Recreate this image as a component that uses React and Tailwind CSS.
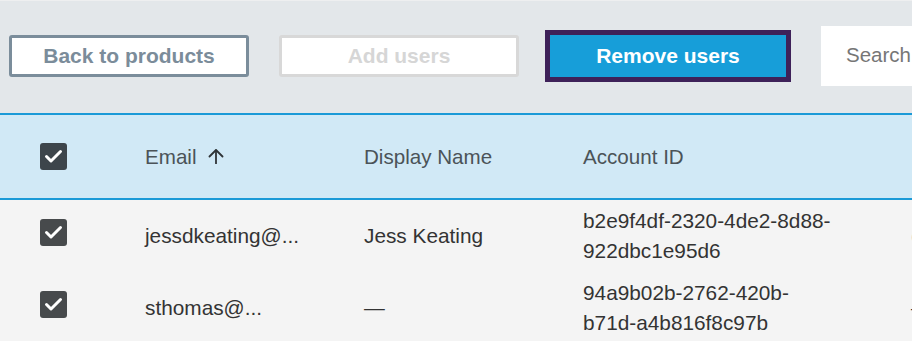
import React from 'react';

const users = [
  {
    email: 'jessdkeating@...',
    name: 'Jess Keating',
    id: ['b2e9f4df-2320-4de2-8d88-', '922dbc1e95d6'],
    extra: 'o',
    extraClass: 'text-[#b5b5b5]',
  },
  {
    email: 'sthomas@...',
    name: '—',
    id: ['94a9b02b-2762-420b-', 'b71d-a4b816f8c97b'],
    extra: '—',
    extraClass: 'text-[#333333]',
  },
];

function Check({ tone }) {
  return (
    <span className={`flex items-center justify-center w-[27px] h-[27px] rounded-[3px] ${tone}`}>
      <svg width="27" height="27" viewBox="0 0 27 27" fill="none">
        <path d="M6.5 13.5 L11 18 L20.5 8.5" stroke="#ffffff" strokeWidth="3" strokeLinecap="round" strokeLinejoin="round" />
      </svg>
    </span>
  );
}

function SortUp() {
  return (
    <svg width="16" height="15" viewBox="0 0 16 15" fill="none" className="ml-[11px]">
      <path d="M1.5 7.5 L8 1 L14.5 7.5" stroke="#2f3437" strokeWidth="1.8" strokeLinecap="round" strokeLinejoin="round" />
      <path d="M8 1.5 V14.5" stroke="#2f3437" strokeWidth="1.8" strokeLinecap="round" />
    </svg>
  );
}

export default function App() {
  return (
    <div className="w-[912px] h-[341px] overflow-hidden bg-[#f4f4f4]" style={{ fontFamily: '"Liberation Sans", Arial, sans-serif' }}>
      {/* toolbar */}
      <div className="h-[113px] bg-[#e3e7ea] border-t border-[#eeeff0] flex items-center pb-[3px] whitespace-nowrap">
        <button className="ml-[9px] shrink-0 w-[240px] h-[42px] bg-white border-[3px] border-[#7b8d9b] rounded-[3px] text-[21px] font-bold text-[#7b8c9a]">
          Back to products
        </button>
        <button className="ml-[30px] shrink-0 w-[240px] h-[42px] bg-white border-[3px] border-[#d8d8d8] rounded-[3px] text-[21px] font-bold text-[#d6d6d6]">
          Add users
        </button>
        <button className="ml-[26px] shrink-0 w-[246px] h-[52px] bg-[#179ed9] border-[5px] border-[#3e2159] text-[21px] font-bold text-white">
          Remove users
        </button>
        <div className="ml-[30px] shrink-0 w-[220px] h-[60px] bg-white flex items-center pl-[25px] text-[20.5px] text-[#767676]">
          Search
        </div>
      </div>

      {/* header */}
      <div className="grid grid-cols-[145px_219px_219px_328px_200px] h-[87px] bg-[#d1e9f6] border-y-2 border-[#1b9ad7] items-center text-[20.6px] leading-[30px] text-[#4b5358] whitespace-nowrap">
        <div className="pl-[40px] flex">
          <Check tone="bg-[#3d454b]" />
        </div>
        <div className="flex items-center">
          Email
          <SortUp />
        </div>
        <div>Display Name</div>
        <div>Account ID</div>
        <div />
      </div>

      {/* rows */}
      {users.map((u, i) => (
        <div key={i} className="grid grid-cols-[145px_219px_219px_328px_200px] h-[72px] items-center text-[20.8px] leading-[30px] text-[#333333] whitespace-nowrap">
          <div className="pl-[40px] flex mb-[8px]">
            <Check tone="bg-[#474a4c]" />
          </div>
          <div>{u.email}</div>
          <div>{u.name}</div>
          <div className="w-[250px]">
            <span className="block">{u.id[0]}</span>
            <span className="block">{u.id[1]}</span>
          </div>
          <div className={u.extraClass}>{u.extra}</div>
        </div>
      ))}
    </div>
  );
}
